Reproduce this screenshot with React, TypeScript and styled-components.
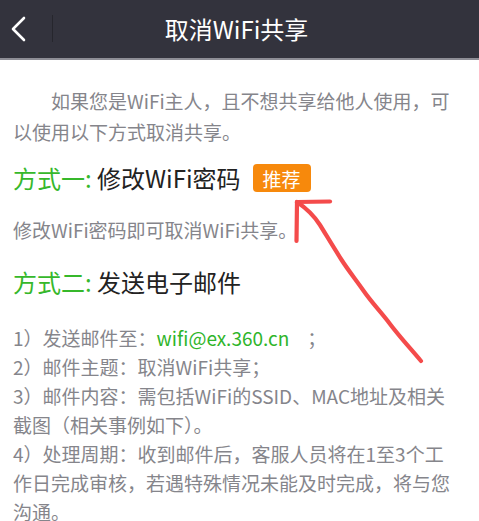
import React from 'react';
import styled, {createGlobalStyle} from 'styled-components';

const GlobalStyle = createGlobalStyle`
  html, body {
    margin: 0;
    padding: 0;
    background: #fff;
  }
  body {
    font-family: "Noto Sans CJK SC", "Noto Sans", sans-serif;
  }
`;

const Styled = {
  Page: styled.div`
    position: relative;
    width: 479px;
    height: 521px;
    overflow: hidden;
    background: #fff;
  `,
  Header: styled.header`
    display: flex;
    align-items: center;
    height: 58px;
    background: #33333d;
    border-bottom: 2px solid #8e8e96;
    position: relative;
  `,
  Back: styled.div`
    display: flex;
    align-items: center;
    justify-content: center;
    width: 36px;
    height: 100%;
  `,
  Divider: styled.div`
    width: 1px;
    height: 27px;
    margin-left: 16px;
    margin-top: -2px;
    background: #26262d;
  `,
  Title: styled.h1`
    position: absolute;
    left: 0;
    right: 6px;
    margin: 0 0 2px 0;
    text-align: center;
    font-size: 24px;
    font-weight: 400;
    color: #fff;
    pointer-events: none;
  `,
  Content: styled.main`
    display: flex;
    flex-direction: column;
    padding: 26px 20px 0 13px;
  `,
  Intro: styled.p`
    margin: 0;
    text-indent: 2em;
    font-size: 19px;
    line-height: 30.5px;
    color: #85858b;
  `,
  Heading: styled.h2<{$gap: number}>`
    display: flex;
    align-items: center;
    margin: ${p => p.$gap}px 0 0 0;
    font-size: 24px;
    line-height: 36px;
    font-weight: 400;
    color: #222;
    white-space: pre;
  `,
  Label: styled.span`
    color: #36b82b;
  `,
  Badge: styled.span`
    display: inline-flex;
    align-items: center;
    justify-content: center;
    margin-left: 12px;
    width: 58px;
    height: 28px;
    border-radius: 4px;
    background: #f7890c;
    color: #fff;
    font-size: 19px;
    line-height: 1;
  `,
  Text: styled.p`
    margin: 19px 0 0 0;
    font-size: 19px;
    line-height: 29px;
    color: #85858b;
  `,
  Steps: styled.ol`
    list-style: none;
    margin: 23px 0 0 0;
    padding: 0;
  `,
  Step: styled.li`
    font-size: 19px;
    line-height: 29px;
    color: #85858b;
  `,
  Email: styled.span`
    color: #2fb52a;
  `,
  Gap: styled.span`
    display: inline-block;
    width: 18px;
  `,
  Overlay: styled.svg`
    position: absolute;
    left: 0;
    top: 0;
    pointer-events: none;
  `,
};

const steps = [
  {
    no: '1',
    content: (
      <>
        发送邮件至：<Styled.Email>wifi@ex.360.cn</Styled.Email>
        <Styled.Gap />；
      </>
    ),
  },
  {no: '2', content: <>邮件主题：取消WiFi共享；</>},
  {
    no: '3',
    content: <>邮件内容：需包括WiFi的SSID、MAC地址及相关截图（相关事例如下）。</>,
  },
  {
    no: '4',
    content: (
      <>
        处理周期：收到邮件后，客服人员将在1至3个工作日完成审核，若遇特殊情况未能及时完成，将与您沟通。
      </>
    ),
  },
];

const BackIcon = () => (
  <svg width="16" height="26" viewBox="0 0 16 26">
    <polyline
      points="14,2 3,13 14,24"
      fill="none"
      stroke="#fff"
      strokeWidth="2.6"
      strokeLinecap="round"
      strokeLinejoin="round"
    />
  </svg>
);

// hand-drawn red arrow pointing at the badge
const Annotation = () => (
  <Styled.Overlay viewBox="0 0 479 521" width="479" height="521">
    <g
      fill="none"
      stroke="#f44b4b"
      strokeWidth="4.2"
      strokeLinecap="round"
      strokeLinejoin="round">
      <path d="M297 202 L330 201.5" />
      <path d="M297 202 L296.5 241" />
      <path d="M297 202 C306 208 313 214 320 225 C328 238 334 248 341 259 C348 270 356 280 363 290 C372 303 381 312 390 324 C399 336 410 348 421 361" />
    </g>
  </Styled.Overlay>
);

export default function App() {
  return (
    <Styled.Page>
      <GlobalStyle />
      <Styled.Header>
        <Styled.Back>
          <BackIcon />
        </Styled.Back>
        <Styled.Divider />
        <Styled.Title>取消WiFi共享</Styled.Title>
      </Styled.Header>
      <Styled.Content>
        <Styled.Intro>
          如果您是WiFi主人，且不想共享给他人使用，可以使用以下方式取消共享。
        </Styled.Intro>
        <Styled.Heading $gap={13}>
          <Styled.Label>方式一:</Styled.Label> 修改WiFi密码
          <Styled.Badge>推荐</Styled.Badge>
        </Styled.Heading>
        <Styled.Text>修改WiFi密码即可取消WiFi共享。</Styled.Text>
        <Styled.Heading $gap={20}>
          <Styled.Label>方式二:</Styled.Label> 发送电子邮件
        </Styled.Heading>
        <Styled.Steps>
          {steps.map(step => (
            <Styled.Step key={step.no}>
              {step.no}）{step.content}
            </Styled.Step>
          ))}
        </Styled.Steps>
      </Styled.Content>
      <Annotation />
    </Styled.Page>
  );
}
